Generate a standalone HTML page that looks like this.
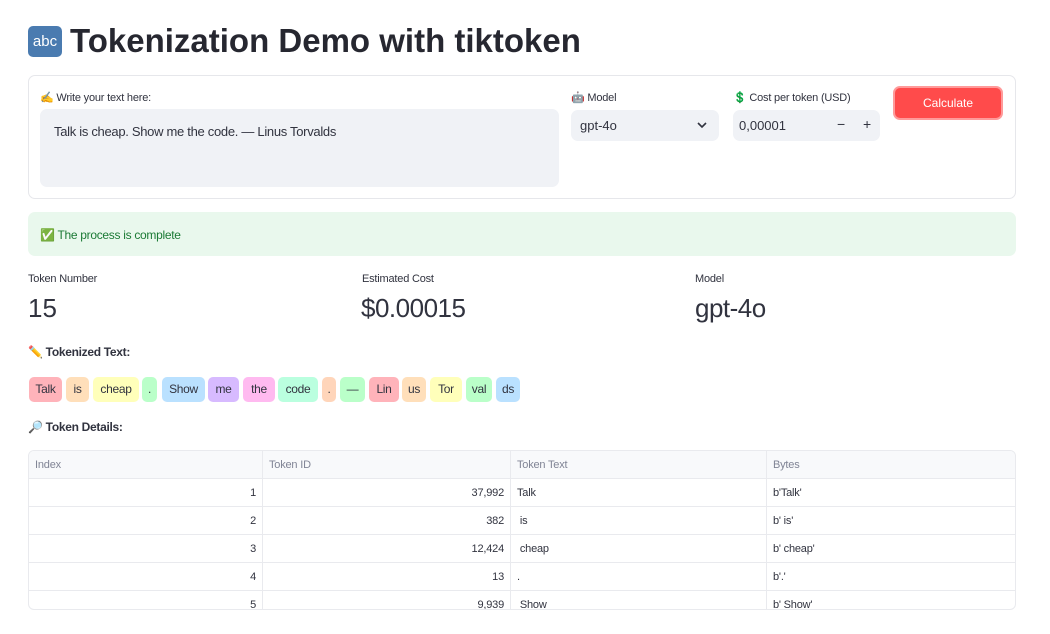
<!DOCTYPE html>
<html><head><meta charset="utf-8"><style>
*{box-sizing:border-box;margin:0;padding:0}
body{width:1050px;height:634px;background:#fff;font-family:"Liberation Sans",sans-serif;color:#31333f;position:relative;overflow:hidden}
.a{position:absolute;white-space:nowrap}
.lbl{font-size:11px;letter-spacing:-0.2px}
.chip{position:absolute;top:377px;height:25px;border-radius:5px;font-size:12px;line-height:25px;text-align:center;letter-spacing:-0.3px}
table{position:absolute;left:28px;top:450px;width:988px;border-collapse:collapse;font-size:11px;letter-spacing:-0.2px}
td,th{height:28px;border:1px solid #e9eaee;padding:0 6px;font-weight:normal}
th{background:#f8f9fb;color:#808495;text-align:left}
td.r{text-align:right}
.wrap{position:absolute;left:28px;top:450px;width:988px;height:160px;border:1px solid #e9eaee;border-radius:6px;overflow:hidden}
.wrap table{left:-1px;top:-1px;width:990px}
</style></head><body>
<div class="a" style="left:28px;top:26px;width:34px;height:31px;background:#4a7bb0;border-radius:5px;color:#fff;font-size:15px;line-height:31px;text-align:center">abc</div>
<div class="a" style="left:70px;top:22px;font-size:33px;font-weight:bold;letter-spacing:0px;color:#262730">Tokenization Demo with tiktoken</div>
<div class="a" style="left:28px;top:75px;width:988px;height:124px;border:1px solid #e6e7eb;border-radius:7px"></div>
<div class="a lbl" style="left:40px;top:91px">✍ Write your text here:</div>
<div class="a" style="left:40px;top:109px;width:519px;height:78px;background:#f0f2f6;border-radius:7px"></div>
<div class="a" style="left:54px;top:124px;font-size:13px;letter-spacing:-0.3px">Talk is cheap. Show me the code. — Linus Torvalds</div>
<div class="a lbl" style="left:571px;top:91px">🤖 Model</div>
<div class="a" style="left:571px;top:110px;width:148px;height:31px;background:#f0f2f6;border-radius:7px"></div>
<div class="a" style="left:580px;top:118px;font-size:13px">gpt-4o</div>
<svg class="a" style="left:697px;top:121px" width="10" height="8"><path d="M1 2l4 4 4-4" stroke="#31333f" stroke-width="1.6" fill="none"/></svg>
<div class="a lbl" style="left:733px;top:91px">💲 Cost per token (USD)</div>
<div class="a" style="left:733px;top:110px;width:147px;height:31px;background:#f0f2f6;border-radius:7px"></div>
<div class="a" style="left:739px;top:118px;font-size:13px">0,00001</div>
<div class="a" style="left:837px;top:116px;font-size:14px">−</div>
<div class="a" style="left:863px;top:116px;font-size:14px">+</div>
<div class="a" style="left:893px;top:86px;width:110px;height:34px;background:#ff4b4b;border:2px solid #ff9a9a;border-radius:7px;color:#fff;font-size:12px;line-height:30px;text-align:center">Calculate</div>
<div class="a" style="left:28px;top:212px;width:988px;height:44px;background:#e9f8ed;border-radius:7px"></div>
<div class="a" style="left:40px;top:228px;font-size:12px;color:#1b7a35;letter-spacing:-0.3px">✅ The process is complete</div>
<div class="a lbl" style="left:28px;top:273px">Token Number</div>
<div class="a lbl" style="left:362px;top:273px">Estimated Cost</div>
<div class="a lbl" style="left:695px;top:273px">Model</div>
<div class="a" style="left:28px;top:293px;font-size:26px">15</div>
<div class="a" style="left:361px;top:293px;font-size:26px;letter-spacing:-0.5px">$0.00015</div>
<div class="a" style="left:695px;top:293px;font-size:26px;letter-spacing:-0.5px">gpt-4o</div>
<div class="a" style="left:28px;top:345px;font-size:12px;font-weight:bold;letter-spacing:-0.3px">✏️ Tokenized Text:</div>
<div class="chip" style="left:29px;width:33px;background:#ffb3ba">Talk</div>
<div class="chip" style="left:66px;width:23px;background:#ffdfba">is</div>
<div class="chip" style="left:93px;width:46px;background:#ffffba">cheap</div>
<div class="chip" style="left:142px;width:15px;background:#baffc9">.</div>
<div class="chip" style="left:162px;width:43px;background:#bae1ff">Show</div>
<div class="chip" style="left:208px;width:31px;background:#d7baff">me</div>
<div class="chip" style="left:243px;width:32px;background:#ffbaf0">the</div>
<div class="chip" style="left:278px;width:40px;background:#baffdf">code</div>
<div class="chip" style="left:322px;width:14px;background:#ffd5ba">.</div>
<div class="chip" style="left:340px;width:25px;background:#baffc9">—</div>
<div class="chip" style="left:369px;width:30px;background:#ffb3ba">Lin</div>
<div class="chip" style="left:402px;width:24px;background:#ffdfba">us</div>
<div class="chip" style="left:430px;width:32px;background:#ffffba">Tor</div>
<div class="chip" style="left:466px;width:26px;background:#baffc9">val</div>
<div class="chip" style="left:496px;width:24px;background:#bae1ff">ds</div>
<div class="a" style="left:28px;top:420px;font-size:12px;font-weight:bold;letter-spacing:-0.3px">🔎 Token Details:</div>
<div class="wrap"><table>
<colgroup><col style="width:234px"><col style="width:248px"><col style="width:256px"><col></colgroup>
<tr><th>Index</th><th>Token ID</th><th>Token Text</th><th>Bytes</th></tr>
<tr><td class="r">1</td><td class="r">37,992</td><td>Talk</td><td>b'Talk'</td></tr>
<tr><td class="r">2</td><td class="r">382</td><td>&nbsp;is</td><td>b' is'</td></tr>
<tr><td class="r">3</td><td class="r">12,424</td><td>&nbsp;cheap</td><td>b' cheap'</td></tr>
<tr><td class="r">4</td><td class="r">13</td><td>.</td><td>b'.'</td></tr>
<tr><td class="r">5</td><td class="r">9,939</td><td>&nbsp;Show</td><td>b' Show'</td></tr>
</table></div>
</body></html>
